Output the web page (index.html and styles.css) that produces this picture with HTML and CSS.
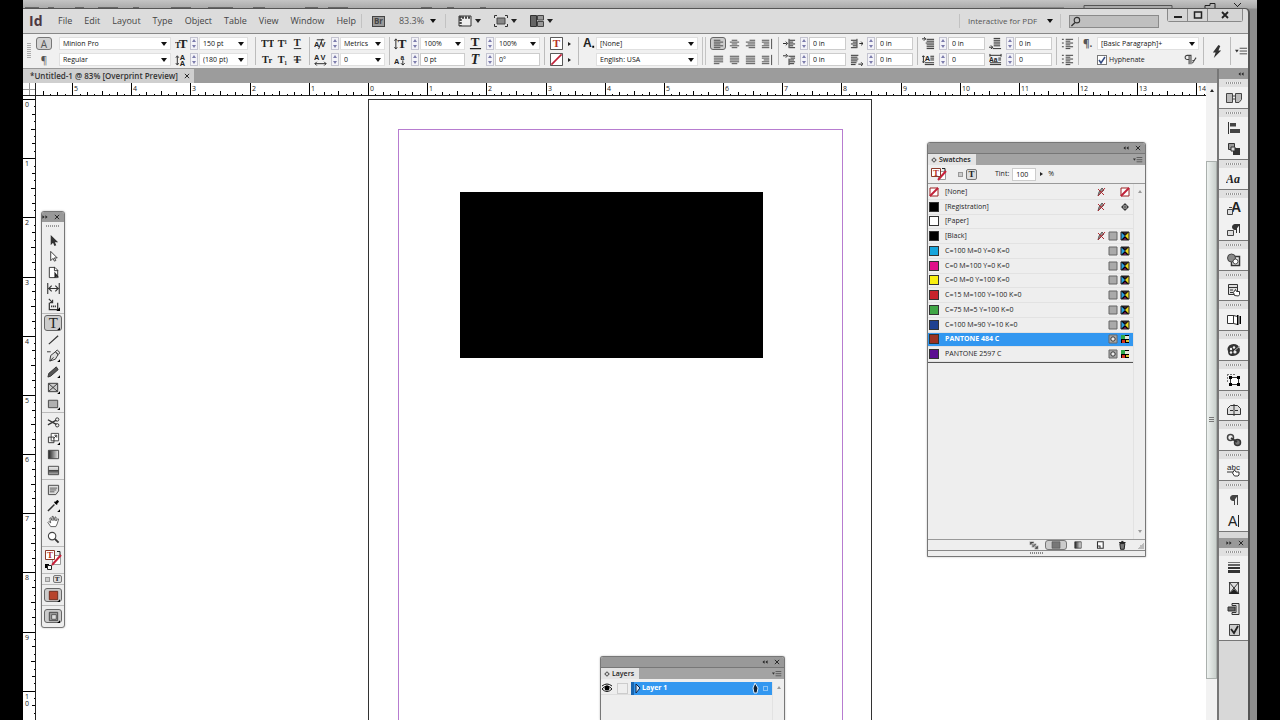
FILE: index.html
```html
<!DOCTYPE html>
<html lang="en">
<head>
    <meta charset="UTF-8">
    <meta name="viewport" content="width=device-width, initial-scale=1.0">
    <title>Untitled-1 @ 83%</title>
    <link rel="stylesheet" href="styles.css">
</head>
<body>

<svg class="gradients" xmlns="http://www.w3.org/2000/svg">
    <linearGradient id="gh"><stop offset="0" stop-color="#222"/><stop offset="1" stop-color="#eee"/></linearGradient>
    <linearGradient id="gv" x2="0" y2="1"><stop offset="0" stop-color="#eee"/><stop offset=".4" stop-color="#ccc"/><stop offset=".5" stop-color="#444"/><stop offset="1" stop-color="#bbb"/></linearGradient>
</svg>

<!-- icon sprite -->
<svg class="sprite" xmlns="http://www.w3.org/2000/svg">
    <symbol id="size" viewBox="0 0 14 14"><text x="0" y="12" font-size="9">T</text><text x="4" y="12" font-size="14">T</text></symbol>
    <symbol id="leading" viewBox="0 0 14 14"><text class="sans" x="5" y="7" font-size="8">A</text><text class="sans" x="5" y="14" font-size="8">A</text><path d="M2.5 4v8M1 5l1.500-2L4 5M1 11l1.500 2L4 11" fill="none" stroke="#222"/></symbol>
    <symbol id="allcaps" viewBox="0 0 14 14"><text x="0" y="11" font-size="11">TT</text></symbol>
    <symbol id="super" viewBox="0 0 14 14"><text x="2" y="11" font-size="11">T</text><text x="9" y="7" font-size="6">1</text></symbol>
    <symbol id="under" viewBox="0 0 14 14"><text x="3" y="10" font-size="11">T</text><path d="M3 12.500h8" stroke="#222"/></symbol>
    <symbol id="smallcaps" viewBox="0 0 14 14"><text x="1" y="11" font-size="11">T</text><text x="8" y="11" font-size="9">r</text></symbol>
    <symbol id="sub" viewBox="0 0 14 14"><text x="2" y="11" font-size="11">T</text><text x="9" y="13" font-size="6">1</text></symbol>
    <symbol id="strike" viewBox="0 0 14 14"><text x="3" y="11" font-size="11">T</text><path d="M3 7.500h8" stroke="#222"/></symbol>
    <symbol id="kern" viewBox="0 0 14 14"><text class="sans" x="0" y="11" font-size="8">A</text><text class="sans" x="7" y="11" font-size="8">V</text><path d="M9 2L5 13M3 3h8" fill="none" stroke="#222"/></symbol>
    <symbol id="track" viewBox="0 0 14 14"><text class="sans" x="0" y="8" font-size="8">A</text><text class="sans" x="7" y="8" font-size="8">V</text><path d="M1 11.500h12M3 9.500l-2 2 2 2M11 9.500l2 2-2 2" fill="none" stroke="#222"/></symbol>
    <symbol id="vscale" viewBox="0 0 14 14"><text x="4" y="12" font-size="14">T</text><path d="M2 3v9M.5 4L2 2l1.500 2M.5 11L2 13l1.500-2" fill="none" stroke="#222"/></symbol>
    <symbol id="hscale" viewBox="0 0 14 14"><text x="2" y="10" font-size="14">T</text><path d="M1 12.500h12" stroke="#222" stroke-width="1.500"/></symbol>
    <symbol id="baseline" viewBox="0 0 14 14"><text class="sans" x="0" y="12" font-size="8">A</text><text class="sans" x="7" y="7" font-size="7">a</text><path d="M9.500 8v5M7.500 11l2 2 2-2" fill="none" stroke="#222"/></symbol>
    <symbol id="skew" viewBox="0 0 14 14"><text x="2" y="12" font-size="15" font-style="italic">T</text></symbol>
    <symbol id="charstyle" viewBox="0 0 14 14"><text class="sans" x="0" y="11" font-size="13">A</text><path d="M10 9.500h2v2h-2z"/></symbol>
    <symbol id="fill-t" viewBox="0 0 14 14"><path d="M.5 .5h13v13H.5z" fill="#fff" stroke="#444"/><text class="red" x="3" y="11" font-size="12">T</text></symbol>
    <symbol id="none" viewBox="0 0 14 14"><path d="M.5 .5h13v13H.5z" fill="#fff" stroke="#444"/><path d="M1.500 12.500l11-11" stroke="#c02038" stroke-width="1.800"/></symbol>
    <symbol id="al" viewBox="0 0 14 14"><path d="M2 3.500h7M2 5.500h10M2 7.500h7M2 9.500h10M2 11.500h7" stroke="#444"/></symbol>
    <symbol id="ac" viewBox="0 0 14 14"><path d="M4 3.500h6M2 5.500h10M4 7.500h6M2 9.500h10M4 11.500h6" stroke="#444"/></symbol>
    <symbol id="ar" viewBox="0 0 14 14"><path d="M6 3.500h6M2 5.500h10M4 7.500h8M2 9.500h10M5 11.500h7" stroke="#444"/></symbol>
    <symbol id="as" viewBox="0 0 14 14"><path d="M2 3.500h8M2 5.500h8M4 7.500h6M2 9.500h8M2 11.500h8M12.500 2v11" stroke="#444"/></symbol>
    <symbol id="jl" viewBox="0 0 14 14"><path d="M2 3.500h10M2 5.500h10M2 7.500h10M2 9.500h10M2 11.500h6" stroke="#444"/></symbol>
    <symbol id="jc" viewBox="0 0 14 14"><path d="M2 3.500h10M2 5.500h10M2 7.500h10M2 9.500h10M4 11.500h6" stroke="#444"/></symbol>
    <symbol id="ja" viewBox="0 0 14 14"><path d="M2 3.500h10M2 5.500h10M2 7.500h10M2 9.500h10M2 11.500h10" stroke="#444"/></symbol>
    <symbol id="ind-l" viewBox="0 0 14 14"><path d="M0 7h4M3 5l2 2-2 2M6.500 2v10M7 3.500h6M7 5.500h4M7 7.500h6M7 9.500h4M7 11.500h6" fill="none" stroke="#222"/></symbol>
    <symbol id="ind-f" viewBox="0 0 14 14"><path d="M0 3h4M3 1l2 2-2 2M6.500 6v7M6 3.500h7M8 5.500h5M7 7.500h5M7 9.500h6M7 11.500h5" fill="none" stroke="#222"/></symbol>
    <symbol id="ind-r" viewBox="0 0 14 14"><path d="M14 7h-4M12 5l2 2-2 2M7.500 2v10M1 3.500h6M3 5.500h4M1 7.500h6M3 9.500h4M1 11.500h6" fill="none" stroke="#222"/></symbol>
    <symbol id="ind-e" viewBox="0 0 14 14"><path d="M9 12h4M12 10l2 2-2 2M1 2.500h8M1 4.500h7M1 6.500h8M1 8.500h7M1 10.500h6M1 12.500h5" fill="none" stroke="#222"/></symbol>
    <symbol id="sp-b" viewBox="0 0 14 14"><path d="M0 2h4M2 0l2 2-2 2M5 2.500h8M5 4.500h8M4 6.500h9M5 8.500h8M5 10.500h8M5 12.500h8" fill="none" stroke="#222"/></symbol>
    <symbol id="sp-a" viewBox="0 0 14 14"><path d="M0 11h4M2 9l2 2-2 2M5 1.500h7M5 3.500h7M5 5.500h7M5 7.500h7M5 9.500h7M4 12.500h9" fill="none" stroke="#222"/></symbol>
    <symbol id="drop" viewBox="0 0 14 14"><text class="sans" x="3" y="9" font-size="8">A</text><path d="M1.500 3v7M0 4.500L1.500 3 3 4.500M0 9l1.500 1.500L3 9M9 3.500h4M9 5.500h4M9 7.500h4M3 10.500h10M3 12.500h10" fill="none" stroke="#222"/></symbol>
    <symbol id="dropn" viewBox="0 0 14 14"><path d="M1 1v3M13 1v3M1 2.500h12M10 5.500h3M10 7.500h3M1 10.500h12M1 12.500h12" fill="none" stroke="#222"/><text class="sans" x="0" y="10" font-size="7">Aa</text></symbol>
    <symbol id="bullets" viewBox="0 0 14 14"><path d="M1 2.500h2M1 6.500h2M1 10.500h2M5 2.500h8M5 4.500h5M5 6.500h8M5 8.500h5M5 10.500h8M5 12.500h5" stroke="#333"/></symbol>
    <symbol id="pil" viewBox="0 0 14 14"><path d="M5.500 2v10M7.500 2v10M8 2.500H3.500a2.200 2.200 0 0 0 0 4.500H5M9 11l4-6M9 8l2 1" fill="none" stroke="#444" stroke-width="1.200"/></symbol>
    <symbol id="bolt" viewBox="0 0 14 14"><path d="M8 0L2 8h3l-2 6 8-8H8l2-5z" fill="#333"/></symbol>
    <symbol id="flyout" viewBox="0 0 14 14"><path d="M0 5h4L2 8z" fill="#333"/><path d="M5 3.500h8M5 6.500h8M5 9.500h8" stroke="#444"/></symbol>
    <symbol id="rewind" viewBox="0 0 14 14"><path d="M6 3v8L1 7zM13 3v8L8 7z" fill="#222"/></symbol>
    <symbol id="forward" viewBox="0 0 14 14"><path d="M1 3v8l5-4zM8 3v8l5-4z" fill="#222"/></symbol>
    <symbol id="close" viewBox="0 0 14 14"><path d="M2 2l10 10M12 2L2 12" stroke="#222" stroke-width="2.200"/></symbol>

    <symbol id="select" viewBox="0 0 14 14"><path d="M4 1v11l2.500-2.500L8 13l2-1-1.500-3H12z" fill="#333"/></symbol>
    <symbol id="direct" viewBox="0 0 14 14"><path d="M4 1.500v10l2.500-2.500L8 12l1.500-.7L8 8.500h3z" fill="#fff" stroke="#333"/></symbol>
    <symbol id="page" viewBox="0 0 14 14"><path d="M2.500 1.500h6l3 3v8h-9z" fill="#fff" stroke="#333"/><path d="M8 1v4h4" fill="none" stroke="#333"/><path d="M8 6v7l2-1.500 3 1z" fill="#222"/></symbol>
    <symbol id="gap" viewBox="0 0 14 14"><path d="M.8 1v12M13.200 1v12M2 7h10M5 4L2 7l3 3M9 4l3 3-3 3" fill="none" stroke="#333" stroke-width="1.200"/></symbol>
    <symbol id="collect" viewBox="0 0 14 14"><path d="M2.500 5v7.500h9V5M5 10V8M7 10V8M9 10V8M2 1l4 4M6 2v3H3" fill="none" stroke="#333" stroke-width="1.300"/><path d="M14 10v4h-4z"/></symbol>
    <symbol id="type" viewBox="0 0 14 14"><text class="thin" x="2" y="12" font-size="16">T</text><path d="M14 11v3h-3z"/></symbol>
    <symbol id="line" viewBox="0 0 14 14"><path d="M2 12L12 3" stroke="#333" stroke-width="1.300"/></symbol>
    <symbol id="pen" viewBox="0 0 14 14"><path d="M3 13l1-6 5-4 3 3-3 5zM3 13l4-4M9 3l2-2 3 3-2 2z" fill="#ddd" stroke="#333"/><path d="M0 3h4" stroke="#333"/><path d="M14 11v3h-3z"/></symbol>
    <symbol id="pencil" viewBox="0 0 14 14"><path d="M1 13l1-4 8-7 2 3-8 7z" fill="#555" stroke="#333"/><path d="M14 11v3h-3z"/></symbol>
    <symbol id="frame" viewBox="0 0 14 14"><path d="M1.500 2.500h10v9h-10zM2 3l9 8M11 3l-9 8" fill="#ccc" stroke="#333"/><path d="M14 11v3h-3z"/></symbol>
    <symbol id="rect" viewBox="0 0 14 14"><path d="M1.500 3.500h10v8h-10z" fill="#b0b0b0" stroke="#444"/><path d="M14 11v3h-3z"/></symbol>
    <symbol id="cut" viewBox="0 0 14 14"><path d="M1 4l9 5M1 9.500l9-5" stroke="#333" stroke-width="1.400"/><circle cx="11" cy="3.800" r="1.800" fill="none" stroke="#333"/><circle cx="11" cy="10" r="1.800" fill="none" stroke="#333"/></symbol>
    <symbol id="transform" viewBox="0 0 14 14"><path d="M4.500 1.500h8v8h-8z" fill="#fff" stroke="#444"/><path d="M1.500 5.500h6v6h-6z" fill="none" stroke="#333"/><path d="M7 7l3-3M8 3.500h2.500V6" fill="none" stroke="#333"/><path d="M14 11v3h-3z"/></symbol>
    <symbol id="gradient" viewBox="0 0 14 14"><path d="M1.500 2.500h11v9h-11z" fill="url(#gh)" stroke="#444"/></symbol>
    <symbol id="feather" viewBox="0 0 14 14"><path d="M1.500 2.500h11v9h-11z" fill="url(#gv)" stroke="#444"/></symbol>
    <symbol id="note" viewBox="0 0 14 14"><path d="M1.500 2.500h11v6l-3 4h-8z" fill="#ddd" stroke="#444"/><path d="M3 5.500h8M3 7.500h7M3 9.500h5" stroke="#555"/></symbol>
    <symbol id="dropper" viewBox="0 0 14 14"><path d="M1 13l7-7M8 3l3 3M9 5l3-3.500" stroke="#333" stroke-width="1.600" fill="none"/><path d="M8 4l3-3 2 2-3 3z"/><path d="M14 11v3h-3z"/></symbol>
    <symbol id="hand" viewBox="0 0 14 14"><path d="M4 12.500L1 8l1-1 2 1.500-1-5 1-.5L5.500 6 5.500 1.500h1.200L7.500 6l1.300-4 1 .5-.3 4L11.500 4l1 .5-1.500 5-1.500 3z" fill="#fff" stroke="#333" stroke-width=".8"/></symbol>
    <symbol id="zoom" viewBox="0 0 14 14"><circle cx="5.500" cy="5.500" r="4" fill="#fff" stroke="#444" stroke-width="1.200"/><path d="M8.500 8.500l4 4" stroke="#333" stroke-width="2"/></symbol>
    <symbol id="fillstroke" viewBox="0 0 18 22"><path d="M8.500 6.500h8v9h-8z" fill="#fff" stroke="#999"/><path d="M8 16L17 6" stroke="#c8203a" stroke-width="2"/><path d="M1.500 1.500h9v9h-9z" fill="#fff" stroke="#8b3a2a"/><text class="red" x="3" y="9" font-size="9">T</text><path d="M13 2.500h3V6" fill="none" stroke="#222"/><path d="M1 15h4v4H1z"/><path d="M3.500 16.500h4v4h-4z" fill="#fff" stroke="#222"/></symbol>
    <symbol id="swatchfs" viewBox="0 0 16 14"><path d="M7.500 4.500h7v8h-7z" fill="#fff" stroke="#999"/><path d="M7 13l8-9" stroke="#c8203a" stroke-width="2"/><path d="M.5 1.500h9v8h-9z" fill="#fff" stroke="#8b3a2a"/><text class="red" x="2" y="9" font-size="9">T</text><path d="M11 1.500h3V4" fill="none" stroke="#222"/></symbol>
    <symbol id="colorbox" viewBox="0 0 14 14"><path d="M2.500 2.500h9v9h-9z" fill="#b8432b" stroke="#6b2a1c"/><path d="M14 11v3h-3z"/></symbol>
    <symbol id="preview" viewBox="0 0 14 14"><path d="M2.500 2.500h9v9h-9z" fill="#999" stroke="#444"/><path d="M5 5h5v5H5z" fill="#ddd" stroke="#555"/><path d="M14 11v3h-3z"/></symbol>

    <symbol id="d-pages" viewBox="0 0 16 14"><path d="M.5 2.500h6v9h-6zM9.500 2.500h6v6l-2.500 3H9.500z" fill="#bbb" stroke="#444"/><path d="M6 5h4M6 8h4" stroke="#444"/></symbol>
    <symbol id="d-align" viewBox="0 0 16 14"><path d="M2.500 1v12" stroke="#333"/><path d="M4 2h6v3.500H4zM4 8h10v4H4z" fill="#444"/></symbol>
    <symbol id="d-path" viewBox="0 0 16 14"><path d="M2.500 1.500h6v6h-6z" fill="#999" stroke="#333"/><path d="M7 6h7v7H7z" fill="#333"/><path d="M5 5h4v4H5z" fill="#ddd" stroke="#333"/></symbol>
    <symbol id="d-glyph" viewBox="0 0 16 14"><text x="0" y="11" font-size="12" font-style="italic">Aa</text></symbol>
    <symbol id="d-chars" viewBox="0 0 16 14"><text class="sans" x="5" y="10" font-size="14">A</text><path d="M1.500 7.500h5v5h-5zM3 5.500h3" fill="#ddd" stroke="#444"/></symbol>
    <symbol id="d-paras" viewBox="0 0 16 14"><path d="M10.500 1v9M13.500 1v9M14 1.500H9a2.500 2.500 0 0 0 0 5h1" fill="#333" stroke="#333"/><path d="M1.500 7.500h6v5h-6z" fill="#ddd" stroke="#444"/></symbol>
    <symbol id="d-object" viewBox="0 0 16 14"><path d="M5.500 3.500h8v9h-8z" fill="#eee" stroke="#333" stroke-width="1.500"/><circle cx="5.500" cy="5" r="4" fill="#888" stroke="#444"/><circle cx="9.500" cy="8.500" r="2.500" fill="#fff" stroke="#444"/></symbol>
    <symbol id="d-inter" viewBox="0 0 16 14"><path d="M2.500 1.500h9v10h-9zM2 4.500h9" fill="#ddd" stroke="#333"/><path d="M4 7h3M4 9.500h3" stroke="#333"/><path d="M8.500 12.500l-1-3 2-3 1 2h3v3l-1 1.500z" fill="#fff" stroke="#333"/></symbol>
    <symbol id="d-book" viewBox="0 0 16 14"><path d="M1.500 2.500h6v8h-6zM7.500 2.500l4 1v8l-4-1z" fill="#fff" stroke="#333"/><path d="M11 2h1.500v10H11zM13.500 3H15v8h-1.500z"/></symbol>
    <symbol id="d-color" viewBox="0 0 16 14"><path d="M2 8a6 5 0 0 1 11-4c3 5-2 9-6 9-4 0-5-2-5-5z" fill="#333"/><circle cx="5" cy="6" r="1.200" fill="#eee"/><circle cx="8" cy="4.500" r="1.200" fill="#eee"/><circle cx="5" cy="9.500" r="1.200" fill="#eee"/><circle cx="9" cy="9" r="1.600" fill="#eee"/><path d="M8 8l6-5" stroke="#bbb"/></symbol>
    <symbol id="d-trans" viewBox="0 0 16 14"><path d="M1 1.500h9M1.500 1v8" stroke="#777" stroke-dasharray="2 1"/><path d="M4.500 4.500h8v7h-8z" fill="#fff" stroke="#333"/><path d="M3 3h3v3H3zM11 3h3v3h-3zM3 10h3v3H3zM11 10h3v3h-3z"/></symbol>
    <symbol id="d-bleed" viewBox="0 0 16 14"><path d="M1.500 5.500l3-3h7l3 3v6h-13z" fill="#ddd" stroke="#333"/><path d="M8 1v12M4 7.500h3M9 7.500h3" stroke="#333"/></symbol>
    <symbol id="d-links" viewBox="0 0 16 14"><circle cx="4.500" cy="4.500" r="3" fill="none" stroke="#444" stroke-width="1.500"/><circle cx="11.500" cy="9.500" r="3" fill="#777" stroke="#333" stroke-width="1.500"/><path d="M5 5l6 4" stroke="#333" stroke-width="2"/></symbol>
    <symbol id="d-abc" viewBox="0 0 16 14"><text class="sansreg" x="1" y="7" font-size="8">abc</text><path d="M1 9h6" stroke="#333"/><path d="M8.500 13l-2-3 2-3 1.500 2h3v3l-1 1z" fill="#fff" stroke="#333"/></symbol>
    <symbol id="d-para" viewBox="0 0 16 14"><path d="M8.500 2v10M11.500 2v10M12 2.500H7a2.500 2.500 0 0 0 0 5h1" fill="#444" stroke="#444"/></symbol>
    <symbol id="d-char" viewBox="0 0 16 14"><text class="sansreg" x="2" y="12" font-size="14">A</text><path d="M12.500 1v12" stroke="#222"/></symbol>
    <symbol id="d-stroke" viewBox="0 0 16 14"><path d="M2 2.500h12" stroke="#777"/><path d="M2 5h12" stroke="#333" stroke-width="1.500"/><path d="M2 8h12" stroke="#333" stroke-width="2"/><path d="M2 11.500h12" stroke="#333" stroke-width="3"/></symbol>
    <symbol id="d-cross" viewBox="0 0 16 14"><path d="M3.500 1.500h9v11h-9z" fill="#ddd" stroke="#444"/><path d="M3 1l10 12M13 1L3 13" stroke="#333"/><path d="M3 13l5-5 5 5z" fill="#222"/></symbol>
    <symbol id="d-wrap" viewBox="0 0 16 14"><path d="M6 1.500h7v11H6v-2h4v-7H6z" fill="#ddd" stroke="#333"/><path d="M2 5h7v4H2z" fill="#666" stroke="#333"/></symbol>
    <symbol id="d-check" viewBox="0 0 16 14"><path d="M3.500 1.500h10v11h-10z" fill="#ccc" stroke="#444"/><path d="M5 6l3 4 4-7" fill="none" stroke="#222" stroke-width="1.800"/></symbol>

    <symbol id="nopen" viewBox="0 0 10 10"><path d="M2 9l1-4 3-4 2 2-4 4z" fill="#999" stroke="#444" stroke-width=".8"/><path d="M2 2l6 6M9 1L2 9" stroke="#b02a30"/></symbol>
    <symbol id="reg" viewBox="0 0 10 10"><circle cx="5" cy="5" r="2.500" fill="none" stroke="#222"/><path d="M5 1v8M1 5h8" stroke="#222" stroke-width=".8"/></symbol>
    <symbol id="s-none" viewBox="0 0 10 10"><path d="M1 1h8v8H1z" fill="#fff" stroke="#922"/><path d="M1 9l8-8" stroke="#c02038" stroke-width="2"/></symbol>
    <symbol id="process" viewBox="0 0 10 10"><path d="M1 1h8v8H1z" fill="#aaa" stroke="#666"/></symbol>
    <symbol id="spot" viewBox="0 0 10 10"><path d="M1 1h8v8H1z" fill="#aaa" stroke="#666"/><circle cx="5" cy="5" r="2.200" fill="#eee" stroke="#333"/></symbol>
    <symbol id="cmyk" viewBox="0 0 10 10"><path d="M1 1h8v8H1z"/><path d="M1 1v8l4-4z" fill="#2a9fe0"/><path d="M9 1v8L5 5z" fill="#ecd820"/><path d="M3 1h5L5 4z" fill="#33202c"/><path d="M3 9h4L5 7z" fill="#b02080"/><path d="M1 1h8v8H1z" fill="none" stroke="#222"/></symbol>
    <symbol id="rgb" viewBox="0 0 10 10"><path d="M1 1h8v8H1z"/><path d="M1 1h4v4H1z" fill="#2fa84a"/><path d="M5 2h4v3H5z" fill="#e4e8d8"/><path d="M2 6h3v3H2z" fill="#d23020"/><path d="M6 6h3v2H6z" fill="#e0c030"/></symbol>
</svg>

<div class="desktop">
    <div class="app">
        <header class="menubar">
            <span class="logo">Id</span>
            <nav class="menus">
                <a href="#">File</a><a href="#">Edit</a><a href="#">Layout</a><a href="#">Type</a><a href="#">Object</a><a href="#">Table</a><a href="#">View</a><a href="#">Window</a><a href="#">Help</a>
            </nav>
            <span class="vline"></span>
            <button class="bridge">Br</button>
            <select class="zoom-level" aria-label="Zoom level"><option>83.3%</option></select>
            <span class="vline"></span>
            <div class="view-buttons">
                <button class="view-button" aria-label="View options"><svg viewBox="0 0 14 12"><path d="M1 1h12v10H1z" fill="#eee" stroke="#333"/><path d="M1 2.500h12M2.500 1v10" stroke="#444" stroke-width="2.500" stroke-dasharray="2 1"/></svg></button>
                <button class="view-button" aria-label="Screen mode"><svg viewBox="0 0 14 12"><path d="M3 3h8v6H3z" fill="#888" stroke="#444"/><path d="M.5 3V.5H3M11 .5h2.500V3M13.500 9v2.500H11M3 11.500H.5V9" fill="none" stroke="#333"/></svg></button>
                <button class="view-button" aria-label="Arrange documents"><svg viewBox="0 0 14 12"><path d="M.5 .5h6v11h-6z" fill="#666" stroke="#333"/><path d="M7.500 .5h6v4.500h-6zM7.500 6.500h6v5h-6z" fill="#999" stroke="#444"/></svg></button>
            </div>
            <span class="spacer"></span>
            <span class="vline"></span>
            <select class="workspace-name" aria-label="Workspace"><option>Interactive for PDF</option></select>
            <span class="vline"></span>
            <label class="search"><svg viewBox="0 0 12 12"><circle cx="7" cy="4.500" r="3" fill="none" stroke="#333" stroke-width="1.200"/><path d="M5 7l-4 4" stroke="#333" stroke-width="1.500"/></svg><input type="text" aria-label="Search"></label>
            <div class="window-buttons">
                <button aria-label="Minimize"><svg viewBox="0 0 12 12"><path d="M2 8h8" stroke="#222" stroke-width="2"/></svg></button>
                <button aria-label="Maximize"><svg viewBox="0 0 12 12"><path d="M2.500 3h7v6h-7z" fill="none" stroke="#222" stroke-width="1.500"/></svg></button>
                <button class="wide" aria-label="Close"><svg viewBox="0 0 12 12"><path d="M3 3l6 6M9 3L3 9" stroke="#222" stroke-width="1.800"/></svg></button>
            </div>
        </header>

        <div class="control-bar">
            <span class="side-grip"></span>
            <div class="modes">
                <button class="on" aria-label="Character formatting">A</button>
                <button aria-label="Paragraph formatting">¶</button>
            </div>
            <div class="stack family">
                <select aria-label="Font"><option>Minion Pro</option></select>
                <select aria-label="Font style"><option>Regular</option></select>
            </div>
            <div class="pair size">
                <svg><use href="#size"/></svg><span class="stepper"></span><select aria-label="Font size"><option>150 pt</option></select>
                <svg><use href="#leading"/></svg><span class="stepper"></span><select aria-label="Leading"><option>(180 pt)</option></select>
            </div>
            <span class="divider"></span>
            <div class="buttons three">
                <button aria-label="All caps"><svg><use href="#allcaps"/></svg></button>
                <button aria-label="Superscript"><svg><use href="#super"/></svg></button>
                <button aria-label="Underline"><svg><use href="#under"/></svg></button>
                <button aria-label="Small caps"><svg><use href="#smallcaps"/></svg></button>
                <button aria-label="Subscript"><svg><use href="#sub"/></svg></button>
                <button aria-label="Strikethrough"><svg><use href="#strike"/></svg></button>
            </div>
            <span class="divider"></span>
            <div class="pair">
                <svg><use href="#kern"/></svg><span class="stepper"></span><select aria-label="Kerning"><option>Metrics</option></select>
                <svg><use href="#track"/></svg><span class="stepper"></span><select aria-label="Tracking"><option>0</option></select>
            </div>
            <span class="divider"></span>
            <div class="pair">
                <svg><use href="#vscale"/></svg><span class="stepper"></span><select aria-label="Vertical scale"><option>100%</option></select>
                <svg><use href="#baseline"/></svg><span class="stepper"></span><input type="text" value="0 pt" aria-label="Baseline shift">
            </div>
            <div class="pair">
                <svg><use href="#hscale"/></svg><span class="stepper"></span><select aria-label="Horizontal scale"><option>100%</option></select>
                <svg><use href="#skew"/></svg><span class="stepper"></span><input type="text" value="0°" aria-label="Skew">
            </div>
            <span class="divider"></span>
            <div class="fills">
                <button aria-label="Fill"><svg><use href="#fill-t"/></svg></button><i></i>
                <button aria-label="Stroke"><svg><use href="#none"/></svg></button><i></i>
            </div>
            <span class="divider"></span>
            <div class="charstyle">
                <svg><use href="#charstyle"/></svg>
                <div class="stack styles">
                    <select aria-label="Character style"><option>[None]</option></select>
                    <select aria-label="Language"><option>English: USA</option></select>
                </div>
            </div>
            <span class="divider double"></span>
            <div class="buttons four">
                <button class="on" aria-label="Align left"><svg><use href="#al"/></svg></button>
                <button aria-label="Align center"><svg><use href="#ac"/></svg></button>
                <button aria-label="Align right"><svg><use href="#ar"/></svg></button>
                <button aria-label="Align towards spine"><svg><use href="#as"/></svg></button>
                <button aria-label="Justify, last line left"><svg><use href="#jl"/></svg></button>
                <button aria-label="Justify, last line centered"><svg><use href="#jc"/></svg></button>
                <button aria-label="Justify all"><svg><use href="#ja"/></svg></button>
                <button aria-label="Align away from spine"><svg><use href="#as"/></svg></button>
            </div>
            <span class="divider"></span>
            <div class="pair short">
                <svg><use href="#ind-l"/></svg><span class="stepper"></span><input type="text" value="0 in" aria-label="Left indent">
                <svg><use href="#ind-f"/></svg><span class="stepper"></span><input type="text" value="0 in" aria-label="First line indent">
            </div>
            <div class="pair short">
                <svg><use href="#ind-r"/></svg><span class="stepper"></span><input type="text" value="0 in" aria-label="Right indent">
                <svg><use href="#ind-e"/></svg><span class="stepper"></span><input type="text" value="0 in" aria-label="Last line indent">
            </div>
            <span class="divider"></span>
            <div class="pair short">
                <svg><use href="#sp-b"/></svg><span class="stepper"></span><input type="text" value="0 in" aria-label="Space before">
                <svg><use href="#drop"/></svg><span class="stepper"></span><input type="text" value="0" aria-label="Drop cap lines">
            </div>
            <div class="pair short">
                <svg><use href="#sp-a"/></svg><span class="stepper"></span><input type="text" value="0 in" aria-label="Space after">
                <svg><use href="#dropn"/></svg><span class="stepper"></span><input type="text" value="0" aria-label="Drop cap characters">
            </div>
            <span class="divider"></span>
            <div class="buttons">
                <button aria-label="Bulleted list"><svg><use href="#bullets"/></svg></button>
                <button aria-label="Numbered list"><svg><use href="#bullets"/></svg></button>
            </div>
            <span class="divider"></span>
            <div class="charstyle">
                <span class="pilcrow">¶.</span>
                <div class="stack styles">
                    <select aria-label="Paragraph style"><option>[Basic Paragraph]+</option></select>
                    <div class="hyphen-row">
                        <label><input type="checkbox" checked>Hyphenate</label>
                        <svg><use href="#pil"/></svg>
                    </div>
                </div>
            </div>
            <span class="divider"></span>
            <button class="quick" aria-label="Quick apply"><svg><use href="#bolt"/></svg></button>
            <span class="divider"></span>
            <button class="bar-menu" aria-label="Panel menu"><svg><use href="#flyout"/></svg></button>
        </div>

        <div class="workspace">
            <main class="document">
                <div class="tabs">
                    <div class="tab">*Untitled-1 @ 83% [Overprint Preview]<button aria-label="Close document"><svg><use href="#close"/></svg></button></div>
                </div>
                <div class="view">
                    <div class="corner"></div>
                    <svg class="ruler-x" id="rulerX"></svg>
                    <svg class="ruler-y" id="rulerY"></svg>
                    <div class="canvas">
                        <div class="sheet"></div>
                        <div class="margins"></div>
                        <div class="text-block"></div>
                    </div>
                    <div class="scrollbar"><div class="thumb"></div></div>
                </div>
            </main>

            <aside class="dock">
                <div class="dock-head end"><svg><use href="#rewind"/></svg></div>
                <div class="dock-group"><button aria-label="Pages"><svg><use href="#d-pages"/></svg></button></div>
                <div class="dock-group"><button aria-label="Align"><svg><use href="#d-align"/></svg></button><button aria-label="Pathfinder"><svg><use href="#d-path"/></svg></button></div>
                <div class="dock-group"><button aria-label="Glyphs"><svg><use href="#d-glyph"/></svg></button></div>
                <div class="dock-group"><button aria-label="Character styles"><svg><use href="#d-chars"/></svg></button><button aria-label="Paragraph styles"><svg><use href="#d-paras"/></svg></button></div>
                <div class="dock-group"><button aria-label="Object styles"><svg><use href="#d-object"/></svg></button></div>
                <div class="dock-group"><button aria-label="Buttons"><svg><use href="#d-inter"/></svg></button></div>
                <div class="dock-group"><button aria-label="Page transitions"><svg><use href="#d-book"/></svg></button></div>
                <div class="dock-group"><button aria-label="Color"><svg><use href="#d-color"/></svg></button></div>
                <div class="dock-group"><button aria-label="Transform"><svg><use href="#d-trans"/></svg></button></div>
                <div class="dock-group"><button aria-label="Bookmarks"><svg><use href="#d-bleed"/></svg></button></div>
                <div class="dock-group"><button aria-label="Links"><svg><use href="#d-links"/></svg></button></div>
                <div class="dock-group"><button aria-label="Hyperlinks"><svg><use href="#d-abc"/></svg></button></div>
                <div class="dock-group"><button aria-label="Paragraph"><svg><use href="#d-para"/></svg></button><button aria-label="Character"><svg><use href="#d-char"/></svg></button></div>
                <div class="dock-gap"></div>
                <div class="dock-head"><svg><use href="#forward"/></svg><svg><use href="#close"/></svg></div>
                <div class="dock-group"><button aria-label="Stroke"><svg><use href="#d-stroke"/></svg></button><button aria-label="Effects"><svg><use href="#d-cross"/></svg></button><button aria-label="Text wrap"><svg><use href="#d-wrap"/></svg></button><button aria-label="Preflight"><svg><use href="#d-check"/></svg></button></div>
            </aside>
        </div>
    </div>

    <!-- bits of the window behind that stay visible -->
    <svg class="behind-top" viewBox="0 0 1234 8" preserveAspectRatio="none">
        <path d="M2 7.500h14M25 7.500h6M52 7.500h9M75 7.500h20M110 7.500h6M148 7.500h20M185 7.500h25M230 7.500h12M282 7.500h13M305 7.500h20M398 7.500h11M424 7.500h7M457 7.500h6" stroke="#666"/>
        <path d="M1061 8V5.500h88V8" fill="#aaa" stroke="#555"/>
        <path d="M1182 8V5.500h5V3.500h5V8M1211 3l4 4M1218 3l-4 4" fill="none" stroke="#222"/>
        <path d="M977 7.500h64" stroke="#888"/>
    </svg>
</div>

<div class="panel toolbox">
    <div class="panel-head"><svg><use href="#forward"/></svg><svg><use href="#close"/></svg></div>
    <div class="grip"></div>
    <div class="tools">
        <button aria-label="Selection"><svg><use href="#select"/></svg></button>
        <button aria-label="Direct selection"><svg><use href="#direct"/></svg></button>
        <button aria-label="Page"><svg><use href="#page"/></svg></button>
        <button aria-label="Gap"><svg><use href="#gap"/></svg></button>
        <button aria-label="Content collector"><svg><use href="#collect"/></svg></button>
    </div>
    <div class="tools">
        <button class="on" aria-label="Type"><svg><use href="#type"/></svg></button>
        <button aria-label="Line"><svg><use href="#line"/></svg></button>
        <button aria-label="Pen"><svg><use href="#pen"/></svg></button>
        <button aria-label="Pencil"><svg><use href="#pencil"/></svg></button>
        <button aria-label="Rectangle frame"><svg><use href="#frame"/></svg></button>
        <button aria-label="Rectangle"><svg><use href="#rect"/></svg></button>
    </div>
    <div class="tools">
        <button aria-label="Scissors"><svg><use href="#cut"/></svg></button>
        <button aria-label="Free transform"><svg><use href="#transform"/></svg></button>
        <button aria-label="Gradient swatch"><svg><use href="#gradient"/></svg></button>
        <button aria-label="Gradient feather"><svg><use href="#feather"/></svg></button>
    </div>
    <div class="tools">
        <button aria-label="Note"><svg><use href="#note"/></svg></button>
        <button aria-label="Eyedropper"><svg><use href="#dropper"/></svg></button>
        <button aria-label="Hand"><svg><use href="#hand"/></svg></button>
        <button aria-label="Zoom"><svg><use href="#zoom"/></svg></button>
    </div>
    <div class="tools"><button class="fill-stroke" aria-label="Fill and stroke"><svg><use href="#fillstroke"/></svg></button></div>
    <div class="tools target"><i></i><b>T</b></div>
    <div class="tools"><button class="on tall" aria-label="Apply color"><svg><use href="#colorbox"/></svg></button></div>
    <div class="tools"><button class="on tall" aria-label="Preview mode"><svg><use href="#preview"/></svg></button></div>
</div>

<section class="panel swatches">
    <div class="panel-head"><svg><use href="#rewind"/></svg><svg><use href="#close"/></svg></div>
    <div class="panel-tabs"><span class="panel-tab">Swatches</span><button aria-label="Swatches menu"><svg><use href="#flyout"/></svg></button></div>
    <div class="tint-row">
        <svg><use href="#swatchfs"/></svg>
        <i class="box-target"></i><b class="text-target">T</b>
        <label for="tint">Tint:</label><input type="text" id="tint" value="100"><i class="right-arrow"></i><span>%</span>
    </div>
    <div class="swatch-area">
        <ul class="swatch-list" id="swatchList"></ul>
        <div class="mini-scroll"></div>
    </div>
    <div class="panel-foot">
        <button aria-label="Show all"><svg viewBox="0 0 14 14"><path d="M1 2h6v5H1zM4 5h6v5H4zM8 8h5v5H8z" fill="#444" stroke="#ddd"/></svg></button>
        <button class="on" aria-label="Show colors"><svg viewBox="0 0 14 14"><path d="M1.500 2.500h11v9h-11z" fill="#777" stroke="#555"/></svg></button>
        <button aria-label="Show gradients"><svg viewBox="0 0 14 14"><path d="M2.500 2.500h9v9h-9z" fill="url(#gh)" stroke="#333"/></svg></button>
        <button aria-label="New swatch"><svg viewBox="0 0 14 14"><path d="M3.500 2.500h8v9h-8zM3 8.500h4v3" fill="#fff" stroke="#333" stroke-width="1.500"/></svg></button>
        <button aria-label="Delete swatch"><svg viewBox="0 0 14 14"><path d="M4 5h7l-1 8H5zM3 3.500h9M6 2h3" fill="#777" stroke="#222" stroke-width="1.400"/></svg></button>
        <i class="resize"></i>
    </div>
    <div class="panel-base"></div>
</section>

<section class="panel layers">
    <div class="panel-head"><svg><use href="#rewind"/></svg><svg><use href="#close"/></svg></div>
    <div class="panel-tabs"><span class="panel-tab">Layers</span><button aria-label="Layers menu"><svg><use href="#flyout"/></svg></button></div>
    <div class="layer-area">
        <div class="layer-row">
            <svg class="eye" viewBox="0 0 12 10"><path d="M1 6q5-6 10 0q-5 5-10 0z" fill="#fff" stroke="#111"/><circle cx="6" cy="5" r="2.500"/><path d="M1 3q5-4 10 0" fill="none" stroke="#111"/></svg>
            <span class="lock"></span>
            <div class="layer-name">
                <svg viewBox="0 0 8 12"><path d="M2 2l4 4-4 5z" fill="#cfe6fb" stroke="#124"/></svg>
                <span>Layer 1</span>
                <svg viewBox="0 0 8 12"><path d="M4 1L2 6l1 5h3l1-5z" fill="#123" stroke="#def"/></svg>
                <i></i>
            </div>
        </div>
        <div class="mini-scroll"></div>
    </div>
</section>

<script src="script.js"></script>
</body>
</html>
```
FILE: script.js
```js
const NS = 'http://www.w3.org/2000/svg';
const INCH = 59.17; // screen pixels per inch at 83.3%

function add(svg, tag, attrs, text) {
    const el = document.createElementNS(NS, tag);
    for (const key in attrs) el.setAttribute(key, attrs[key]);
    if (text !== undefined) el.textContent = text;
    svg.appendChild(el);
}

// one tick every 1/8 inch
function drawRuler(id, zero, vertical) {
    const svg = document.getElementById(id);
    const box = svg.getBoundingClientRect();
    const length = vertical ? box.height : box.width;
    for (let i = Math.ceil(-zero / INCH * 8); i * INCH / 8 + zero < length; i++) {
        const pos = Math.round(zero + i * INCH / 8);
        const size = i % 8 === 0 ? 13 : i % 4 === 0 ? 5 : i % 2 === 0 ? 4 : 2;
        if (vertical) {
            add(svg, 'rect', { x: 13 - size, y: pos, width: size, height: 1 });
        } else {
            add(svg, 'rect', { x: pos, y: 13 - size, width: 1, height: size });
        }
        if (i % 8) continue;
        const label = String(Math.abs(i / 8));
        if (vertical) {
            [...label].forEach((digit, n) => add(svg, 'text', { x: 2, y: pos + 8 + n * 7 }, digit));
        } else {
            add(svg, 'text', { x: pos + 2, y: 8 }, label);
        }
    }
}
drawRuler('rulerX', 332, false);
drawRuler('rulerY', 3, true);

document.querySelectorAll('.stepper').forEach(el => {
    el.innerHTML = '<button aria-label="Increase"></button><button aria-label="Decrease"></button>';
});

const swatches = [
    ['[None]', 'none', ['nopen', '', 's-none']],
    ['[Registration]', '#000', ['nopen', '', 'reg']],
    ['[Paper]', '#fff', ['', '', '']],
    ['[Black]', '#000', ['nopen', 'process', 'cmyk']],
    ['C=100 M=0 Y=0 K=0', '#16a5dc', ['', 'process', 'cmyk']],
    ['C=0 M=100 Y=0 K=0', '#e0118a', ['', 'process', 'cmyk']],
    ['C=0 M=0 Y=100 K=0', '#f8ee10', ['', 'process', 'cmyk']],
    ['C=15 M=100 Y=100 K=0', '#c8232b', ['', 'process', 'cmyk']],
    ['C=75 M=5 Y=100 K=0', '#3fa544', ['', 'process', 'cmyk']],
    ['C=100 M=90 Y=10 K=0', '#1f4191', ['', 'process', 'cmyk']],
    ['PANTONE 484 C', '#9b3323', ['', 'spot', 'rgb']],
    ['PANTONE 2597 C', '#5b0d91', ['', 'spot', 'rgb']]
];

document.getElementById('swatchList').innerHTML = swatches.map(([name, color, icons]) => `
    <li class="${name === 'PANTONE 484 C' ? 'selected' : ''}">
        ${color === 'none' ? '<svg><use href="#s-none"/></svg>' : `<i class="chip" style="background:${color}"></i>`}
        <span>${name}</span>
        ${icons.map(icon => icon ? `<svg><use href="#${icon}"/></svg>` : '<i></i>').join('')}
    </li>`).join('');
```
FILE: styles.css
```css
* {
    box-sizing: border-box;
}
body {
    margin: 0;
    height: 100vh;
    overflow: hidden;
    background: #000;
    color: #222;
    font-family: "Open Sans", "Noto Sans", sans-serif;
    font-size: 8px;
    line-height: 12px;
}
button {
    display: flex;
    align-items: center;
    justify-content: center;
    padding: 0;
    border: 0;
    background: none;
    font: inherit;
    color: inherit;
}
svg {
    display: block;
    flex: none;
}
svg text {
    font-family: "Liberation Serif", serif;
    font-weight: bold;
    fill: #222;
}
svg text.sans {
    font-family: "Liberation Sans", sans-serif;
}
svg text.sansreg {
    font-family: "Liberation Sans", sans-serif;
    font-weight: normal;
}
svg text.thin {
    font-weight: normal;
}
svg text.red {
    fill: #b8341f;
}
.sprite {
    display: none;
}
.gradients {
    position: absolute;
    width: 0;
    height: 0;
}
select, input[type="text"] {
    appearance: none;
    width: 100%;
    height: 13px;
    margin: 0;
    padding: 0 3px;
    border: 1px solid #e0e0e0;
    border-radius: 0;
    background: #fff;
    font: inherit;
    font-size: 7px;
    color: #111;
}
select {
    background: #fff url('data:image/svg+xml,<svg xmlns="http://www.w3.org/2000/svg" width="6" height="4"><path d="M0 0h6L3 4z" fill="%23111"/></svg>') no-repeat right 3px center;
}
input[type="text"] {
    border-color: #ccc;
}

/* main window */
.desktop {
    position: relative;
    height: 100vh;
    margin: 0 23px;
    padding: 8px 7px 0 0;
    background: linear-gradient(#c4c4c4, #aaa 8px, #8e8e8e 9px, #8e8e8e);
}
.behind-top {
    position: absolute;
    top: 0;
    left: 0;
    width: 100%;
    height: 8px;
}
.app {
    display: flex;
    flex-direction: column;
    height: 100%;
    border-top: 1px solid #555;
    border-right: 2px solid #555;
    border-radius: 0 5px 0 0;
    background: #dcdcdc;
    overflow: hidden;
}
.menubar {
    display: flex;
    align-items: center;
    flex: none;
    height: 24px;
    padding-left: 6px;
    font-size: 9px;
    color: #444;
}
.logo {
    width: 29px;
    font-size: 14px;
    font-weight: bold;
    color: #4d3841;
}
.menus {
    display: flex;
    gap: 12px;
    margin-right: 5px;
}
.menus a {
    color: inherit;
    text-decoration: none;
}
.vline {
    width: 1px;
    height: 14px;
    background: #c2c2c2;
}
.bridge {
    width: 13px;
    height: 11px;
    margin: 0 14px 0 10px;
    border: 1px solid #444;
    background: #999;
    font-size: 8px;
    line-height: 8px;
    font-weight: bold;
}
.menubar select {
    border: 0;
    background-color: transparent;
    font-size: 9px;
    padding: 0;
    color: #555;
}
.menubar .zoom-level {
    width: 40px;
    margin-right: 6px;
}
.view-buttons {
    display: flex;
    gap: 13px;
    padding-left: 12px;
}
.view-button {
    gap: 3px;
}
.view-button svg {
    width: 14px;
    height: 12px;
}
.view-button::after {
    content: "";
    border: 3px solid transparent;
    border-top: 4px solid #222;
    border-bottom: 0;
}
.spacer {
    flex: 1;
}
.menubar .workspace-name {
    width: 88px;
    margin: 0 4px 0 8px;
    font-size: 8px;
}
.search {
    display: flex;
    align-items: center;
    width: 90px;
    height: 13px;
    margin: 0 8px;
    border: 1px solid #8a8a8a;
    background: #bfbfbf;
}
.search svg {
    width: 12px;
    height: 11px;
}
.search input[type="text"] {
    height: 11px;
    border: 0;
    background: transparent;
}
.window-buttons {
    display: flex;
    align-self: flex-start;
    margin-right: 5px;
    border: 1px solid #888;
    border-top: 0;
    border-radius: 0 0 3px 3px;
}
.window-buttons button {
    width: 20px;
    height: 12px;
    border-right: 1px solid #888;
    background: #d5d5d5;
}
.window-buttons .wide {
    width: 34px;
    border-right: 0;
}
.window-buttons svg {
    width: 12px;
    height: 12px;
}

/* control bar */
.control-bar {
    display: flex;
    gap: 4px;
    flex: none;
    height: 36px;
    padding: 3px 0 3px 4px;
    border-top: 1px solid #888;
    border-bottom: 1px solid #999;
    background: #f0f0f0;
    overflow: hidden;
}
.control-bar > * {
    flex: none;
}
.control-bar svg {
    width: 13px;
    height: 13px;
}
.side-grip {
    width: 4px;
    margin: 6px 1px 6px 0;
    background: repeating-linear-gradient(#aaa 0 1px, transparent 1px 2px);
}
.divider {
    width: 1px;
    background: #bcbcbc;
}
.divider.double {
    width: 4px;
    border: solid #c4c4c4;
    border-width: 0 1px;
    background: none;
}
.modes, .stack {
    display: grid;
    grid-template-rows: 13px 13px;
    gap: 3px;
}
.modes {
    width: 16px;
    margin-right: 3px;
    font-size: 10px;
    color: #555;
}
.modes .on {
    border: 1px solid #777;
    border-radius: 3px;
    background: #d2d2d2;
}
.family {
    width: 112px;
}
.pair {
    display: grid;
    grid-template-columns: 16px 8px 45px;
    grid-template-rows: 13px 13px;
    gap: 3px 1px;
}
.pair.size {
    grid-template-columns: 14px 8px 49px;
    margin-right: 3px;
}
.pair.short {
    grid-template-columns: 16px 8px 37px;
}
.stepper {
    display: grid;
    grid-template-rows: 1fr 1fr;
    border: 1px solid #c4c4d0;
    background: #f3f3f8;
}
.stepper button::before {
    content: "";
    border: 2px solid transparent;
    border-bottom: 3px solid #7c7cac;
    border-top: 0;
}
.stepper button + button::before {
    border-top: 3px solid #7c7cac;
    border-bottom: 0;
}
.buttons {
    display: grid;
    grid-template-rows: 13px 13px;
    gap: 3px 0;
}
.buttons.three {
    grid-template-columns: repeat(3, 15px);
}
.buttons.four {
    grid-template-columns: repeat(4, 16px);
}
.buttons .on {
    border: 1px solid #666;
    border-radius: 3px;
    background: #ccc;
}
.fills {
    display: grid;
    grid-template-columns: 14px 9px;
    grid-template-rows: 13px 13px;
    gap: 3px 2px;
    align-items: center;
}
.fills i, .right-arrow {
    justify-self: center;
    border: 2px solid transparent;
    border-left: 3px solid #222;
    border-right: 0;
}
.charstyle {
    display: flex;
}
.pilcrow {
    width: 14px;
    font-size: 10px;
    font-weight: bold;
    color: #555;
}
.styles {
    width: 102px;
}
.hyphen-row {
    display: flex;
    align-items: center;
    justify-content: space-between;
    padding-right: 2px;
}
.hyphen-row label {
    display: flex;
    align-items: center;
    gap: 2px;
    font-size: 7px;
}
.hyphen-row input {
    appearance: none;
    width: 10px;
    height: 10px;
    margin: 0;
    border: 1px solid #777;
    background: #fff url('data:image/svg+xml,<svg xmlns="http://www.w3.org/2000/svg" viewBox="0 0 8 8"><path d="M1 4l2 3 4-6" fill="none" stroke="%23334a80" stroke-width="1.500"/></svg>');
}
.quick {
    width: 18px;
}
.bar-menu {
    width: 12px;
}

/* document */
.workspace {
    display: flex;
    flex: 1;
    min-height: 0;
}
.document {
    display: flex;
    flex-direction: column;
    flex: 1;
    min-width: 0;
}
.tabs {
    display: flex;
    flex: none;
    height: 14px;
    background: #9c9c9c;
}
.tab {
    display: flex;
    align-items: center;
    gap: 6px;
    padding: 0 4px 0 7px;
    background: #cfcfcf;
    font-weight: 600;
    color: #333;
}
.tab svg {
    width: 6px;
    height: 6px;
}
.view {
    display: grid;
    grid-template-columns: 13px 1fr 11px;
    grid-template-rows: 13px 1fr;
    flex: 1;
    min-height: 0;
    background: #fff;
}
.corner {
    border-right: 1px solid #222;
    border-bottom: 1px solid #222;
    background:
        linear-gradient(#999, #999) center / 1px 100% no-repeat,
        linear-gradient(#999, #999) center / 100% 1px no-repeat;
}
.ruler-x {
    width: 100%;
    height: 13px;
    border-bottom: 1px solid #222;
}
.ruler-y {
    width: 13px;
    height: 100%;
    grid-row: 2;
    border-right: 1px solid #222;
}
.ruler-x text, .ruler-y text {
    font: 7px "Open Sans", sans-serif;
}
.canvas {
    position: relative;
    overflow: hidden;
}
.sheet, .margins, .text-block {
    position: absolute;
}
.sheet {
    left: 332px;
    top: 3px;
    width: 504px;
    height: 652px;
    border: 1px solid #333;
}
.margins {
    left: 362px;
    top: 33px;
    width: 445px;
    height: 592px;
    border: 1px solid #b77cd0;
}
.text-block {
    left: 424px;
    top: 96px;
    width: 303px;
    height: 166px;
    background: #000;
}
.scrollbar {
    grid-column: 3;
    grid-row: 1 / 3;
    display: flex;
    flex-direction: column;
    align-items: center;
    padding: 6px 0 41px;
    background: #f2f2f2;
}
.scrollbar::before {
    content: "";
    border: 2px solid transparent;
    border-top: 0;
    border-bottom: 3px solid #222;
}
.thumb {
    flex: 1;
    display: flex;
    align-items: center;
    justify-content: center;
    width: 11px;
    margin-top: 69px;
    border: 1px solid #aab0ad;
    background: linear-gradient(to right, #eef2f0, #c9d0cc);
}
.thumb::before {
    content: "";
    width: 5px;
    height: 6px;
    background: repeating-linear-gradient(#777 0 1px, transparent 1px 2px);
}

/* icon dock */
.dock {
    flex: none;
    width: 31px;
    border-left: 2px solid #777;
    background: #d8d8d8;
}
.dock-head, .panel-head {
    display: flex;
    align-items: center;
    justify-content: flex-end;
    gap: 6px;
    height: 10px;
    padding: 0 4px;
    background: #999;
}
.dock-head svg, .panel-head svg {
    width: 6px;
    height: 6px;
}
.dock-group {
    border-bottom: 1px solid #777;
    background: #f1f1f1;
}
.dock-group::before, .grip::before {
    content: "";
    display: block;
    width: 14px;
    height: 2px;
    margin: 0 auto;
    background: repeating-linear-gradient(to right, #999 0 1px, transparent 1px 2px);
}
.dock-group::before {
    box-sizing: border-box;
    width: 100%;
    height: 8px;
    border: solid #e0e0e0;
    border-width: 3px 7px;
}
.dock-group button {
    width: 100%;
    height: 21px;
}
.dock-group svg {
    width: 16px;
    height: 14px;
}
.dock-gap {
    height: 6px;
}

/* floating panels */
.panel {
    position: absolute;
    border: 1px solid #777;
    border-radius: 3px 3px 0 0;
    background: #eee;
    box-shadow: 0 0 2px rgba(0, 0, 0, 0.3);
    overflow: hidden;
}
.panel-tabs {
    display: flex;
    justify-content: space-between;
    height: 12px;
    border-top: 1px solid #777;
    background: #a3a3a3;
}
.panel-tab {
    display: flex;
    align-items: center;
    gap: 2px;
    padding: 0 5px 0 3px;
    background: #e4e4e4;
    font-size: 7px;
    font-weight: 600;
}
.panel-tab::before {
    content: "";
    width: 2px;
    height: 2px;
    margin: 1px;
    border: 1px solid #555;
    transform: rotate(45deg);
}
.panel-tabs button {
    width: 14px;
}
.panel-tabs svg {
    width: 10px;
    height: 10px;
}

.toolbox {
    left: 41px;
    top: 211px;
    width: 24px;
    padding-bottom: 1px;
    border-radius: 3px;
}
.grip {
    height: 9px;
    padding-top: 3px;
}
.tools {
    padding: 1px 0;
    border-bottom: 1px solid #bbb;
}
.tools:last-child {
    border-bottom: 0;
}
.tools button {
    width: 18px;
    height: 16px;
    margin: 0 auto;
}
.tools svg {
    width: 13px;
    height: 13px;
}
.tools .on {
    border: 1px solid #666;
    border-radius: 3px;
    background: #ccc;
}
.tools .fill-stroke {
    height: 24px;
}
.tools .fill-stroke svg {
    width: 18px;
    height: 22px;
}
.tools .tall {
    height: 14px;
    margin: 2px auto;
}
.target {
    display: flex;
    justify-content: center;
    gap: 3px;
    height: 11px;
    align-items: center;
}
.target i, .box-target {
    width: 5px;
    height: 5px;
    border: 1px solid #999;
    background: #ccc;
}
.target b, .text-target {
    width: 9px;
    border: 1px solid #777;
    border-radius: 2px;
    background: #ddd;
    font: bold 7px/6px "Liberation Serif", serif;
    text-align: center;
}

.swatches {
    left: 927px;
    top: 142px;
    width: 219px;
}
.tint-row {
    display: flex;
    align-items: center;
    height: 19px;
    padding-left: 3px;
    border-bottom: 1px solid #999;
    font-size: 7px;
}
.tint-row svg {
    width: 16px;
    height: 14px;
    margin-right: 11px;
}
.tint-row .text-target {
    width: 11px;
    margin: 0 18px 0 3px;
    font-size: 9px;
    line-height: 9px;
}
.tint-row input[type="text"] {
    width: 24px;
    margin: 0 4px 0 3px;
}
.right-arrow {
    margin-right: 5px;
}
.swatch-area {
    display: flex;
    height: 355px;
}
.swatch-list {
    display: grid;
    grid-auto-rows: 1fr;
    flex: 1;
    height: 179px;
    margin: 0;
    padding: 1px 0 0;
    border-bottom: 1px solid #555;
    list-style: none;
    font-size: 7px;
}
.swatch-list li {
    display: grid;
    grid-template-columns: 10px 1fr 10px 10px 10px;
    align-items: center;
    column-gap: 2px;
    padding: 0 3px 0 1px;
    border-bottom: 1px solid #e2e2e2;
}
.swatch-list .selected {
    background: #3297f0;
    color: #fff;
    font-weight: bold;
}
.swatch-list span {
    padding-left: 4px;
}
.swatch-list svg {
    width: 10px;
    height: 10px;
}
.swatch-list .chip {
    width: 10px;
    height: 10px;
    border: 1px solid #333;
}
.mini-scroll {
    display: flex;
    flex-direction: column;
    align-items: center;
    justify-content: space-between;
    width: 12px;
    padding: 6px 0;
    border-left: 1px solid #e2e2e2;
}
.mini-scroll::before, .mini-scroll::after {
    content: "";
    border: 2px solid transparent;
    border-top: 0;
    border-bottom: 3px solid #999;
}
.mini-scroll::after {
    border-top: 3px solid #999;
    border-bottom: 0;
}
.panel-foot {
    display: flex;
    align-items: center;
    justify-content: flex-end;
    height: 12px;
    border-top: 1px solid #999;
    border-bottom: 1px solid #888;
}
.panel-foot button {
    width: 22px;
    height: 10px;
}
.panel-foot svg {
    width: 10px;
    height: 10px;
}
.panel-foot .on {
    border: 1px solid #777;
    border-radius: 3px;
    background: #ccc;
}
.resize {
    width: 7px;
    height: 7px;
    margin: 0 1px 0 4px;
    background: linear-gradient(135deg, transparent 50%, #bbb 50%);
}
.panel-base {
    height: 5px;
    padding-top: 1px;
}
.panel-base::before {
    content: "";
    display: block;
    width: 14px;
    height: 2px;
    margin: 0 auto;
    background: repeating-linear-gradient(to right, #888 0 1px, transparent 1px 2px);
}

.layers {
    left: 600px;
    bottom: 0;
    width: 185px;
    height: 64px;
    border-bottom: 0;
}
.layer-area {
    display: flex;
    height: 100%;
    padding-top: 3px;
}
.layer-area .mini-scroll {
    padding-top: 4px;
}
.layer-row {
    display: flex;
    align-items: center;
    flex: 1;
    height: 13px;
    border-bottom: 1px solid #ddd;
}
.eye {
    width: 12px;
    height: 10px;
}
.lock {
    width: 11px;
    height: 11px;
    margin: 0 3px 0 4px;
    border: 1px solid #ccc;
}
.layer-name {
    display: flex;
    align-items: center;
    flex: 1;
    height: 13px;
    padding-right: 4px;
    border-left: 3px solid #1a66b0;
    background: #3297f0;
    font-size: 7px;
    font-weight: bold;
    color: #fff;
}
.layer-name svg {
    width: 8px;
    height: 12px;
}
.layer-name span {
    flex: 1;
}
.layer-name i {
    width: 5px;
    height: 5px;
    margin-left: 4px;
    border: 1px solid #8cc4f6;
}
```
